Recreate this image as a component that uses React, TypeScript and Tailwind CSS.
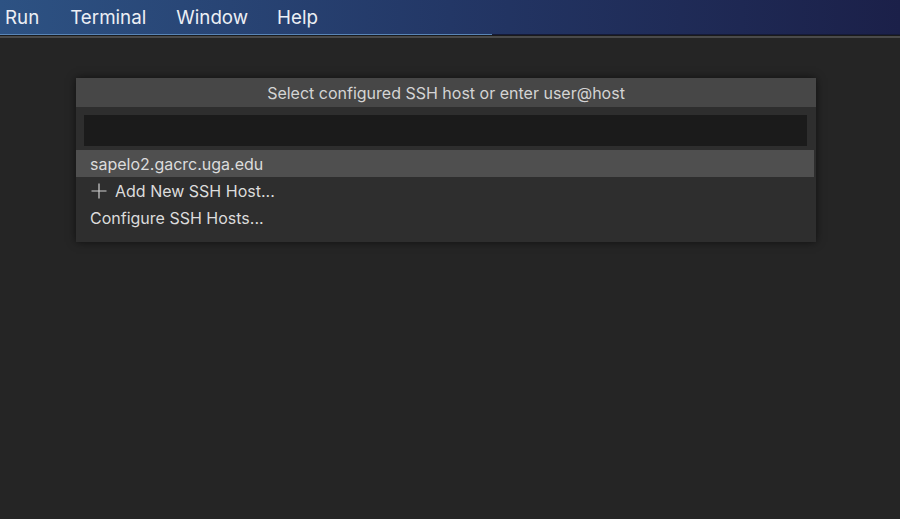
import React from "react";

export default function App() {
  return (
    <div className="w-[900px] h-[519px] bg-[#252525] overflow-hidden" style={{ fontFamily: "Inter, 'Noto Sans', sans-serif" }}>
      <div className="h-[34px] pt-[2px] bg-gradient-to-r from-[#2d5283] via-[#233766] to-[#1b2049] flex items-center text-[18.75px] text-[#eceff4]">
        <span className="ml-[5px]">Run</span>
        <span className="ml-[31px]">Terminal</span>
        <span className="ml-[30px]">Window</span>
        <span className="ml-[29px]">Help</span>
      </div>
      <div className="h-[1px] flex">
        <div className="w-[492px] bg-[#5a86b8]" />
        <div className="flex-1 bg-[#151a38]" />
      </div>
      <div className="h-[1px] bg-[#1a1a1a]" />
      <div className="h-[2px] bg-[#4a4a4a]" />
      <div className="ml-[76px] mt-[40px] w-[740px] h-[164px] bg-[#2e2e2e] shadow-[0_0_8px_rgba(0,0,0,0.6)] flex flex-col">
        <div className="h-[29px] pt-[1px] bg-[#474747] flex items-center justify-center text-[16px] text-[#d4d4d4]">
          Select configured SSH host or enter user@host
        </div>
        <div className="mt-[8px] ml-[8px] mr-[9px] h-[31px] bg-[#1b1b1b]" />
        <div className="mt-[4px] mr-[2px] h-[27px] bg-[#4f4f4f] flex items-center pl-[14px] text-[16px] text-[#dcdcdc]">
          sapelo2.gacrc.uga.edu
        </div>
        <div className="h-[27px] flex items-center pl-[15px] text-[16px] text-[#dcdcdc]">
          <svg width="16" height="16" viewBox="0 0 16 16" className="mr-[8px]">
            <path d="M8 0.5V15.5M0.5 8H15.5" stroke="#cfcfcf" strokeWidth="1.2" fill="none" />
          </svg>
          Add New SSH Host...
        </div>
        <div className="h-[28px] flex items-center pl-[14px] text-[16px] text-[#dcdcdc]">
          Configure SSH Hosts...
        </div>
      </div>
    </div>
  );
}
